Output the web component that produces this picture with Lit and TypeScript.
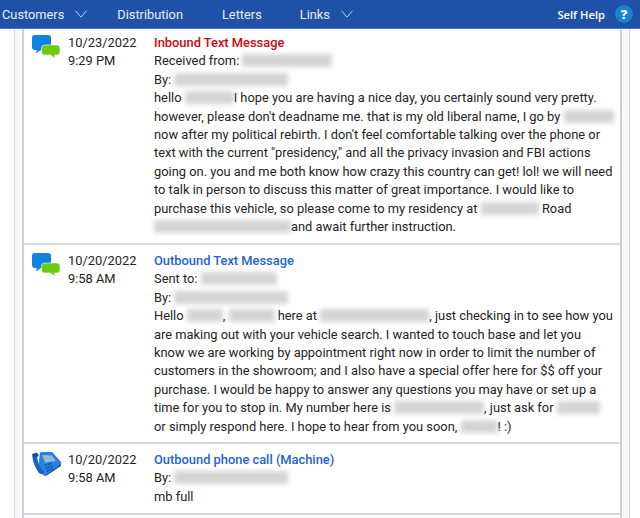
import { LitElement, html, css } from "lit";
import { customElement } from "lit/decorators.js";

const chev = html`<svg class="chev" width="12" height="8" viewBox="0 0 12 8"><path d="M.5.7 6 7.200 11.500.7" fill="none" stroke="#c4d2ea" stroke-width="1"/></svg>`;
const blur = (w: number, o = 0.42) => html`<span class="blur" style="width:${w}px;opacity:${o}"></span>`;

const chat = html`<svg width="29" height="25" viewBox="0 0 29 25">
  <path d="M4 0h13a3 3 0 0 1 3 3v9a3 3 0 0 1-3 3H10l-5 3.500.8-3.500H4a3 3 0 0 1-3-3V3a3 3 0 0 1 3-3z" fill="#0e84e2"/>
  <path d="M13.500 10h12.500a3 3 0 0 1 3 3v4a3 3 0 0 1-3 3h-2.500l.5 3.500-4.500-3.500H13.500a3 3 0 0 1-3-3v-4a3 3 0 0 1 3-3z" fill="#6acb10" stroke="#fff" stroke-width=".6"/>
</svg>`;

const phone = html`<svg width="31" height="26" viewBox="0 0 31 26">
  <path d="M9 2 Q9 1 11 1 L20 1 Q22 1 23 3 L30 11 Q31 13 29 15 L16 24 Q14 25.500 12 24 L9 21 Q7 12 9 2z" fill="#2a7fe0"/>
  <path d="M29.500 13 L15 24 L14 25.500 L30 15z" fill="#1658ad"/>
  <path d="M11 4 L21 4.500 L25 10 L14 11.500z" fill="#8dbfd6"/>
  <path d="M14 14 l7-1.500M15 17 l7-2M16 20 l6-2.500" stroke="#0f4c9c" stroke-width="1.600" stroke-dasharray="1.600 1" fill="none"/>
  <path d="M2 5 Q2 3 5 4 Q6 14 12 21.500 Q10 23 8.500 21.500 Q3 14 2 5z" fill="#1f66c8" stroke="#1a5bb5" stroke-width="1.500"/>
  <path d="M1 3 L6 1.500 L8 5 L3 7z" fill="#134f9e"/>
</svg>`;

@customElement("app-root")
export class AppRoot extends LitElement {
  static styles = css`
    :host { display: block; width: 640px; height: 518px; overflow: hidden; background: #fff; font-family: Roboto, "Liberation Sans", sans-serif; font-size: 12.870px; color: #242424; }
    .nav { height: 28px; background: #1f51a8; border-bottom: 1px solid #4a79c4; display: flex; align-items: center; color: #e8eef8; font-size: 12.800px; padding-left: 2px; }
    .nav span { white-space: nowrap; }
    .chev { margin-left: 11px; }
    .i1 { margin-left: 30px; }
    .i2 { margin-left: 39px; }
    .i3 { margin-left: 38px; }
    .help { margin-left: auto; display: flex; align-items: center; gap: 10px; padding-right: 7px; color: #fff; font-family: "Open Sans", sans-serif; font-size: 11.200px; font-weight: 600; }
    .q { width: 18px; height: 18px; border-radius: 50%; background: #1b82d0; display: flex; align-items: center; justify-content: center; font-size: 13px; font-weight: 800; }
    .frame { margin-left: 14px; width: 616px; height: 489px; box-sizing: border-box; background: #f8f8f8; border-left: 1px solid #d4d4dc; border-right: 1px solid #cfcfd6; padding: 0 7px; }
    .panel { background: #fff; height: 100%; border-left: 2px solid #d0d0da; border-right: 2px solid #cfcfd8; box-sizing: border-box; width: 600px; }
    .row { display: flex; border-bottom: 2px solid #d6d6de; box-sizing: border-box; padding-left: 7px; }
    .ico { width: 37px; flex: none; padding-top: 6px; }
    .ico.p { padding-top: 7px; }
    .date { width: 86px; flex: none; line-height: 18.400px; padding-top: 5px; }
    .body { line-height: 18.400px; padding-top: 5px; white-space: nowrap; }
    .t { font-weight: 500; }
    .red { color: #d2060f; }
    .blue { color: #1f63d6; }
    .blur { display: inline-block; height: 13px; vertical-align: -2px; background: #9a9a9a; filter: blur(2.500px); }
    .r1 { height: 216px; } .r2 { height: 199px; } .r3 { height: 71px; }
    .r2 .body, .r2 .date, .r3 .body, .r3 .date { padding-top: 7px; }
    .r2 .ico { padding-top: 8px; }
  `;
  render() {
    return html`
      <div class="nav">
        <span>Customers</span>${chev}
        <span class="i1">Distribution</span>
        <span class="i2">Letters</span>
        <span class="i3">Links</span>${chev}
        <div class="help"><span>Self Help</span><div class="q">?</div></div>
      </div>
      <div class="frame"><div class="panel">
        <div class="row r1">
          <div class="ico">${chat}</div>
          <div class="date">10/23/2022<br>9:29 PM</div>
          <div class="body">
            <div class="t red">Inbound Text Message</div>
            <div>Received from: ${blur(90)}</div>
            <div>By: ${blur(114)}</div>
            <div>hello ${blur(49)}I hope you are having a nice day, you certainly sound very pretty.</div>
            <div>however, please don't deadname me. that is my old liberal name, I go by ${blur(50)}</div>
            <div>now after my political rebirth. I don't feel comfortable talking over the phone or</div>
            <div>text with the current "presidency," and all the privacy invasion and FBI actions</div>
            <div>going on. you and me both know how crazy this country can get! lol! we will need</div>
            <div>to talk in person to discuss this matter of great importance. I would like to</div>
            <div>purchase this vehicle, so please come to my residency at ${blur(58)} Road</div>
            <div>${blur(137)}and await further instruction.</div>
          </div>
        </div>
        <div class="row r2">
          <div class="ico">${chat}</div>
          <div class="date">10/20/2022<br>9:58 AM</div>
          <div class="body">
            <div class="t blue">Outbound Text Message</div>
            <div>Sent to: ${blur(76)}</div>
            <div>By: ${blur(114)}</div>
            <div>Hello ${blur(36)}, ${blur(46)} here at ${blur(109)}, just checking in to see how you</div>
            <div>are making out with your vehicle search. I wanted to touch base and let you</div>
            <div>know we are working by appointment right now in order to limit the number of</div>
            <div>customers in the showroom; and I also have a special offer here for $$ off your</div>
            <div>purchase. I would be happy to answer any questions you may have or set up a</div>
            <div>time for you to stop in. My number here is ${blur(90)}, just ask for ${blur(43)}</div>
            <div>or simply respond here. I hope to hear from you soon, ${blur(37)}! :)</div>
          </div>
        </div>
        <div class="row r3">
          <div class="ico p">${phone}</div>
          <div class="date">10/20/2022<br>9:58 AM</div>
          <div class="body">
            <div class="t blue">Outbound phone call (Machine)</div>
            <div>By: ${blur(114)}</div>
            <div>mb full</div>
          </div>
        </div>
      </div></div>
    `;
  }
}
